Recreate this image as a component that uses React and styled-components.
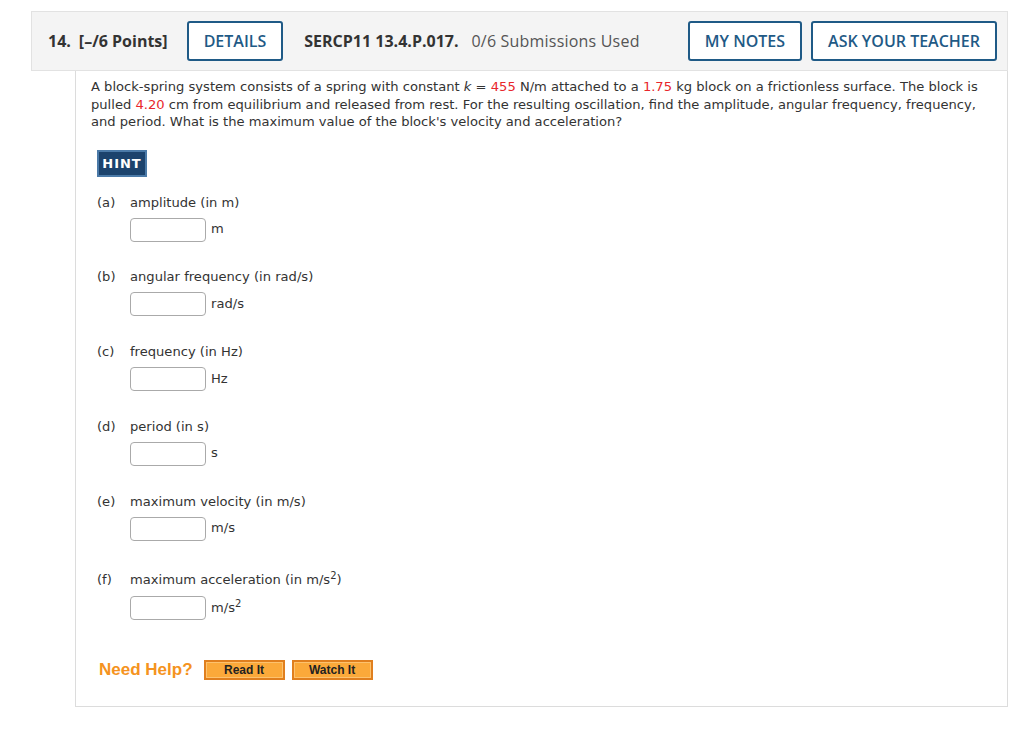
import React from "react";
import styled, { createGlobalStyle } from "styled-components";

const GlobalStyle = createGlobalStyle`
  body {
    margin: 0;
    background: #ffffff;
  }
`;

const parts = [
  { tag: "(a)", label: "amplitude (in m)", unit: "m" },
  { tag: "(b)", label: "angular frequency (in rad/s)", unit: "rad/s" },
  { tag: "(c)", label: "frequency (in Hz)", unit: "Hz" },
  { tag: "(d)", label: "period (in s)", unit: "s" },
  { tag: "(e)", label: "maximum velocity (in m/s)", unit: "m/s" },
  { tag: "(f)", label: "maximum acceleration (in m/s", sup: true, unit: "m/s" },
];

export default function App() {
  return (
    <Page>
      <GlobalStyle />
      <Question>
        <Header>
          <Number>14.</Number>
          <Points>[–/6 Points]</Points>
          <OutlineButton>DETAILS</OutlineButton>
          <Code>SERCP11 13.4.P.017.</Code>
          <Submissions>0/6 Submissions Used</Submissions>
          <Spacer />
          <OutlineButton $wide>MY NOTES</OutlineButton>
          <OutlineButton $wide>ASK YOUR TEACHER</OutlineButton>
        </Header>
        <Body>
          <Problem>
            A block-spring system consists of a spring with constant <i>k</i> ={" "}
            <Red>455</Red> N/m attached to a <Red>1.75</Red> kg block on a
            frictionless surface. The block is pulled <Red>4.20</Red> cm from
            equilibrium and released from rest. For the resulting oscillation,
            find the amplitude, angular frequency, frequency, and period. What is
            the maximum value of the block's velocity and acceleration?
          </Problem>
          <HintButton>HINT</HintButton>
          <Parts>
            {parts.map((p) => (
              <Part key={p.tag} $tall={p.sup}>
                <PartLabel>
                  <Tag>{p.tag}</Tag>
                  <span>
                    {p.label}
                    {p.sup && (
                      <>
                        <sup>2</sup>)
                      </>
                    )}
                  </span>
                </PartLabel>
                <AnswerRow>
                  <AnswerInput type="text" />
                  <Unit>
                    {p.unit}
                    {p.sup && <sup>2</sup>}
                  </Unit>
                </AnswerRow>
              </Part>
            ))}
          </Parts>
          <HelpRow>
            <HelpTitle>Need Help?</HelpTitle>
            <HelpButton>Read It</HelpButton>
            <HelpButton>Watch It</HelpButton>
          </HelpRow>
        </Body>
      </Question>
    </Page>
  );
}

const Page = styled.div`
  padding: 11px 16px 0 31px;
`;

const Question = styled.div`
  width: 977px;
`;

const Header = styled.div`
  display: flex;
  align-items: center;
  height: 60px;
  padding: 0 10px 0 16px;
  background: #f4f4f4;
  border: 1px solid #e2e2e2;
  font-family: "Open Sans", "Noto Sans", sans-serif;
  color: #333;
  box-sizing: border-box;
`;

const Number = styled.span`
  font-weight: 700;
  font-size: 16px;
  margin-right: 8px;
`;

const Points = styled.span`
  font-weight: 700;
  font-size: 16px;
  margin-right: 19px;
`;

const OutlineButton = styled.button`
  height: 40px;
  padding: 0 15px;
  margin-right: ${(p) => (p.$wide ? "0" : "21px")};
  margin-left: ${(p) => (p.$wide ? "9px" : "0")};
  background: #ffffff;
  border: 2px solid #1f5a86;
  border-radius: 3px;
  color: #1f5a86;
  font-family: "Open Sans", "Noto Sans", sans-serif;
  font-size: 16px;
  font-weight: 600;
`;

const Code = styled.span`
  font-weight: 700;
  font-size: 16px;
  margin-right: 13px;
`;

const Submissions = styled.span`
  font-size: 16px;
  color: #555;
  letter-spacing: 0.2px;
`;

const Spacer = styled.div`
  flex: 1;
`;

const Body = styled.div`
  margin-left: 44px;
  border: 1px solid #dcdcdc;
  border-top: none;
  padding: 7px 20px 26px 15px;
  font-family: "DejaVu Sans", Verdana, sans-serif;
  color: #333;
`;

const Problem = styled.p`
  margin: 0;
  font-size: 13.1px;
  line-height: 17.6px;
`;

const Red = styled.span`
  color: #e8262b;
`;

const HintButton = styled.button`
  display: block;
  margin: 19px 0 0 6px;
  width: 50px;
  height: 27px;
  padding: 0;
  background: #1c436d;
  border: 2px solid #4b7aa8;
  color: #ffffff;
  font-family: "DejaVu Sans", Verdana, sans-serif;
  font-weight: 700;
  font-size: 13px;
  letter-spacing: 1px;
`;

const Parts = styled.div`
  display: flex;
  flex-direction: column;
  gap: 26.7px;
  margin: 17px 0 0 6px;
`;

const Part = styled.div`
  display: flex;
  flex-direction: column;
  gap: ${(p) => (p.$tall ? "7px" : "6px")};
  margin-top: ${(p) => (p.$tall ? "4px" : "0")};
`;

const PartLabel = styled.div`
  display: flex;
  font-size: 13.1px;
  line-height: 18px;

  sup {
    font-size: 10px;
    line-height: 0;
  }
`;

const Tag = styled.span`
  width: 33px;
`;

const AnswerRow = styled.div`
  display: flex;
  align-items: center;
  padding-left: 33px;
`;

const AnswerInput = styled.input`
  width: 76px;
  height: 24px;
  box-sizing: border-box;
  border: 1px solid #aaaaaa;
  border-radius: 4px;
  margin: 0 5px 0 0;
`;

const Unit = styled.span`
  font-size: 13.1px;
  margin-top: -2px;

  sup {
    font-size: 10px;
    line-height: 0;
  }
`;

const HelpRow = styled.div`
  display: flex;
  align-items: center;
  gap: 7px;
  margin: 40px 0 0 8px;
`;

const HelpTitle = styled.span`
  font-family: "Liberation Sans", Arial, sans-serif;
  font-weight: 700;
  font-size: 17px;
  color: #f59320;
  margin-right: 4px;
`;

const HelpButton = styled.button`
  width: 81px;
  height: 20px;
  padding: 0;
  background: #fba93a;
  border: 2px solid #e07f1e;
  box-shadow: inset 0 0 0 1px #fdc26e;
  color: #222;
  font-family: "Liberation Sans", Arial, sans-serif;
  font-weight: 700;
  font-size: 12px;
`;
